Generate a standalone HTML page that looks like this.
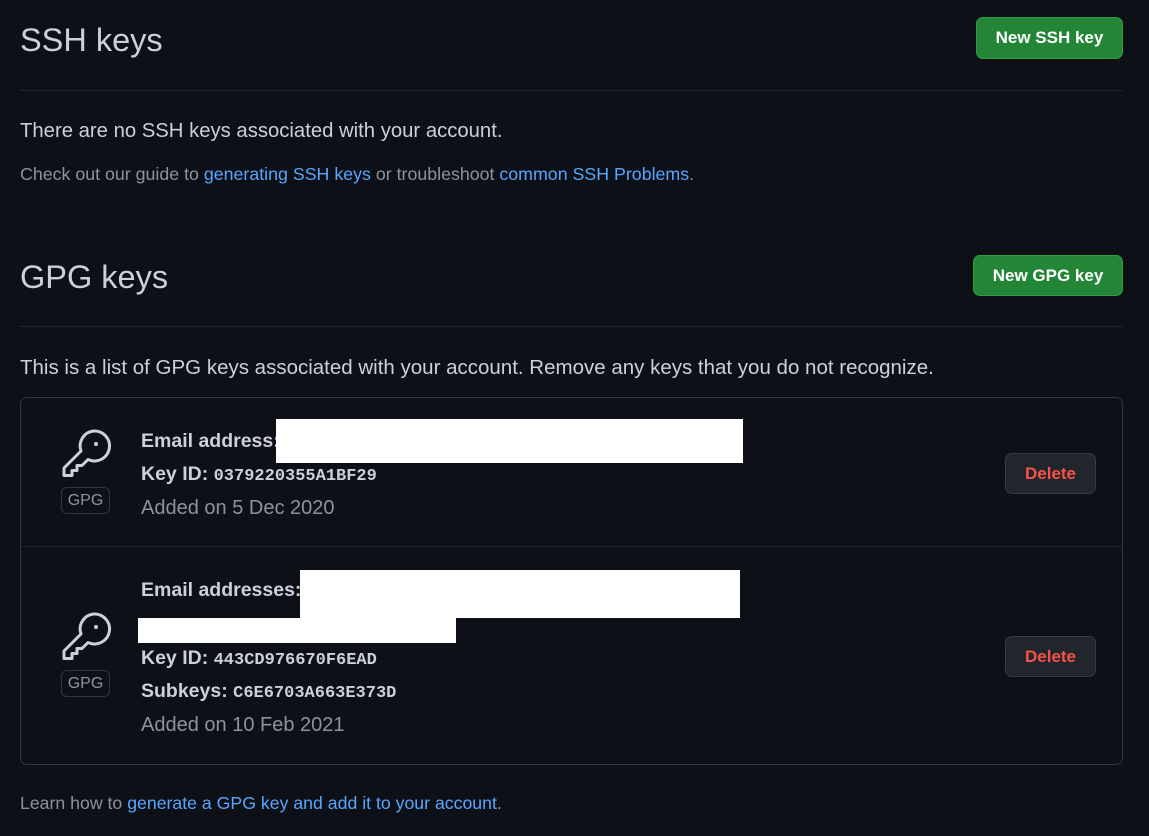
<!DOCTYPE html>
<html><head><style>
body{margin:0;background:#0d1117;width:1149px;height:836px;overflow:hidden;font-family:"Liberation Sans",sans-serif;color:#c9d1d9;position:relative}
.a{position:absolute;white-space:nowrap}
h2{position:absolute;margin:0;font-weight:400;font-size:32.5px;color:#c9d1d9;left:20px}
.hr{position:absolute;left:20px;width:1103px;height:1px;background:#21262d}
.btn{position:absolute;background:#238636;border:1px solid #2ea043;border-radius:7px;color:#fff;font-weight:700;font-size:17px;display:flex;align-items:center;justify-content:center;box-sizing:border-box}
.del{position:absolute;left:1005px;width:91px;height:41px;background:#21262d;border:1px solid #363b42;border-radius:7px;color:#f85149;font-size:17px;font-weight:700;display:flex;align-items:center;justify-content:center;box-sizing:border-box}
.link{color:#58a6ff}
.muted{color:#8b949e}
.box{position:absolute;left:20px;top:397px;width:1103px;height:368px;border:1px solid #30363d;border-radius:7px;box-sizing:border-box}
.lbl{font-weight:700;font-size:19.5px;color:#c9d1d9}
.mono{font-family:"Liberation Mono",monospace;font-weight:700;font-size:17px}
.gpg{position:absolute;left:61px;width:49px;height:27px;border:1px solid #30363d;border-radius:6px;box-sizing:border-box;color:#8b949e;font-size:16px;display:flex;align-items:center;justify-content:center}
.w{position:absolute;background:#fff}
</style></head><body>
<h2 style="top:22px">SSH keys</h2>
<div class="btn" style="left:976px;top:17px;width:147px;height:42px">New SSH key</div>
<div class="hr" style="top:90px"></div>
<div class="a" style="left:20px;top:120px;font-size:20.3px">There are no SSH keys associated with your account.</div>
<div class="a muted" style="left:20px;top:164px;font-size:17.8px">Check out our guide to <span class="link">generating SSH keys</span> or troubleshoot <span class="link">common SSH Problems</span>.</div>

<h2 style="top:259px">GPG keys</h2>
<div class="btn" style="left:973px;top:255px;width:150px;height:41px">New GPG key</div>
<div class="hr" style="top:326px"></div>
<div class="a" style="left:20px;top:356px;font-size:20.5px">This is a list of GPG keys associated with your account. Remove any keys that you do not recognize.</div>

<div class="box"></div>
<div class="hr" style="top:546px;left:21px;width:1101px"></div>

<svg class="a" style="left:58px;top:428px" width="56" height="52" viewBox="0 0 56 52" fill="none" stroke="#c9d1d9" stroke-width="3" stroke-linejoin="round" stroke-linecap="round">
<path d="M36 3a15 15 0 1 1-6 28.5L24 37.5h-5v5h-5v5H6v-7.5l17-17A15 15 0 0 1 36 3z"/><circle cx="38" cy="16" r="2" fill="#c9d1d9" stroke="none"/>
</svg>
<div class="gpg" style="top:487px">GPG</div>
<div class="a lbl" style="left:141px;top:430px">Email address:</div>
<div class="w" style="left:276px;top:419px;width:467px;height:44px"></div>
<div class="a lbl" style="left:141px;top:463px">Key ID: <span class="mono">0379220355A1BF29</span></div>
<div class="a muted" style="left:141px;top:497px;font-size:20px">Added on 5 Dec 2020</div>
<div class="del" style="top:453px">Delete</div>

<svg class="a" style="left:58px;top:611px" width="56" height="52" viewBox="0 0 56 52" fill="none" stroke="#c9d1d9" stroke-width="3" stroke-linejoin="round" stroke-linecap="round">
<path d="M36 3a15 15 0 1 1-6 28.5L24 37.5h-5v5h-5v5H6v-7.5l17-17A15 15 0 0 1 36 3z"/><circle cx="38" cy="16" r="2" fill="#c9d1d9" stroke="none"/>
</svg>
<div class="gpg" style="top:670px">GPG</div>
<div class="a lbl" style="left:141px;top:579px">Email addresses:</div>
<div class="w" style="left:300px;top:570px;width:440px;height:48px"></div>
<div class="w" style="left:138px;top:618px;width:318px;height:25px"></div>
<div class="a lbl" style="left:141px;top:647px">Key ID: <span class="mono">443CD976670F6EAD</span></div>
<div class="a lbl" style="left:141px;top:680px">Subkeys: <span class="mono">C6E6703A663E373D</span></div>
<div class="a muted" style="left:141px;top:714px;font-size:20px">Added on 10 Feb 2021</div>
<div class="del" style="top:636px">Delete</div>

<div class="a muted" style="left:20px;top:793px;font-size:17.7px">Learn how to <span class="link">generate a GPG key and add it to your account</span>.</div>
</body></html>
